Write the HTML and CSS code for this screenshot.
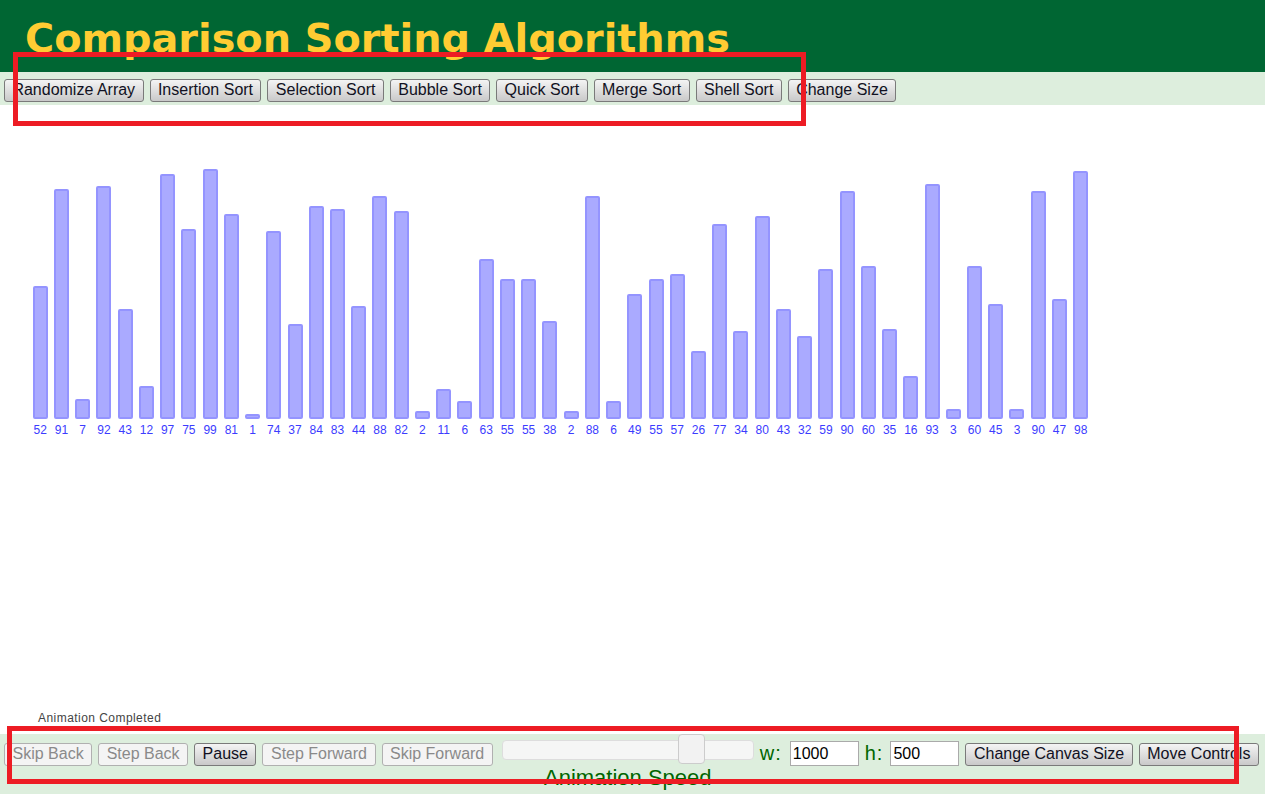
FILE: index.html
```html
<!DOCTYPE html>
<html lang="en">
<head>
    <meta charset="UTF-8">
    <meta name="viewport" content="width=device-width, initial-scale=1.0">
    <title>Comparison Sorting Algorithms</title>
    <link rel="stylesheet" href="styles.css">
</head>
<body>
    <header class="title-bar">
        <h1>Comparison Sorting Algorithms</h1>
    </header>

    <!-- Algorithm controls -->
    <div class="algo-bar">
        <button class="btn">Randomize Array</button>
        <button class="btn">Insertion Sort</button>
        <button class="btn">Selection Sort</button>
        <button class="btn">Bubble Sort</button>
        <button class="btn">Quick Sort</button>
        <button class="btn">Merge Sort</button>
        <button class="btn">Shell Sort</button>
        <button class="btn">Change Size</button>
    </div>

    <!-- Bars -->
    <main class="canvas-area">
        <div class="chart">
            <div class="col"><div class="bar" style="height:133px"></div><span class="num">52</span></div>
            <div class="col"><div class="bar" style="height:230.5px"></div><span class="num">91</span></div>
            <div class="col"><div class="bar" style="height:20.5px"></div><span class="num">7</span></div>
            <div class="col"><div class="bar" style="height:233px"></div><span class="num">92</span></div>
            <div class="col"><div class="bar" style="height:110.5px"></div><span class="num">43</span></div>
            <div class="col"><div class="bar" style="height:33px"></div><span class="num">12</span></div>
            <div class="col"><div class="bar" style="height:245.5px"></div><span class="num">97</span></div>
            <div class="col"><div class="bar" style="height:190.5px"></div><span class="num">75</span></div>
            <div class="col"><div class="bar" style="height:250.5px"></div><span class="num">99</span></div>
            <div class="col"><div class="bar" style="height:205.5px"></div><span class="num">81</span></div>
            <div class="col"><div class="bar" style="height:5.5px"></div><span class="num">1</span></div>
            <div class="col"><div class="bar" style="height:188px"></div><span class="num">74</span></div>
            <div class="col"><div class="bar" style="height:95.5px"></div><span class="num">37</span></div>
            <div class="col"><div class="bar" style="height:213px"></div><span class="num">84</span></div>
            <div class="col"><div class="bar" style="height:210.5px"></div><span class="num">83</span></div>
            <div class="col"><div class="bar" style="height:113px"></div><span class="num">44</span></div>
            <div class="col"><div class="bar" style="height:223px"></div><span class="num">88</span></div>
            <div class="col"><div class="bar" style="height:208px"></div><span class="num">82</span></div>
            <div class="col"><div class="bar" style="height:8px"></div><span class="num">2</span></div>
            <div class="col"><div class="bar" style="height:30.5px"></div><span class="num">11</span></div>
            <div class="col"><div class="bar" style="height:18px"></div><span class="num">6</span></div>
            <div class="col"><div class="bar" style="height:160.5px"></div><span class="num">63</span></div>
            <div class="col"><div class="bar" style="height:140.5px"></div><span class="num">55</span></div>
            <div class="col"><div class="bar" style="height:140.5px"></div><span class="num">55</span></div>
            <div class="col"><div class="bar" style="height:98px"></div><span class="num">38</span></div>
            <div class="col"><div class="bar" style="height:8px"></div><span class="num">2</span></div>
            <div class="col"><div class="bar" style="height:223px"></div><span class="num">88</span></div>
            <div class="col"><div class="bar" style="height:18px"></div><span class="num">6</span></div>
            <div class="col"><div class="bar" style="height:125.5px"></div><span class="num">49</span></div>
            <div class="col"><div class="bar" style="height:140.5px"></div><span class="num">55</span></div>
            <div class="col"><div class="bar" style="height:145.5px"></div><span class="num">57</span></div>
            <div class="col"><div class="bar" style="height:68px"></div><span class="num">26</span></div>
            <div class="col"><div class="bar" style="height:195.5px"></div><span class="num">77</span></div>
            <div class="col"><div class="bar" style="height:88px"></div><span class="num">34</span></div>
            <div class="col"><div class="bar" style="height:203px"></div><span class="num">80</span></div>
            <div class="col"><div class="bar" style="height:110.5px"></div><span class="num">43</span></div>
            <div class="col"><div class="bar" style="height:83px"></div><span class="num">32</span></div>
            <div class="col"><div class="bar" style="height:150.5px"></div><span class="num">59</span></div>
            <div class="col"><div class="bar" style="height:228px"></div><span class="num">90</span></div>
            <div class="col"><div class="bar" style="height:153px"></div><span class="num">60</span></div>
            <div class="col"><div class="bar" style="height:90.5px"></div><span class="num">35</span></div>
            <div class="col"><div class="bar" style="height:43px"></div><span class="num">16</span></div>
            <div class="col"><div class="bar" style="height:235.5px"></div><span class="num">93</span></div>
            <div class="col"><div class="bar" style="height:10.5px"></div><span class="num">3</span></div>
            <div class="col"><div class="bar" style="height:153px"></div><span class="num">60</span></div>
            <div class="col"><div class="bar" style="height:115.5px"></div><span class="num">45</span></div>
            <div class="col"><div class="bar" style="height:10.5px"></div><span class="num">3</span></div>
            <div class="col"><div class="bar" style="height:228px"></div><span class="num">90</span></div>
            <div class="col"><div class="bar" style="height:120.5px"></div><span class="num">47</span></div>
            <div class="col"><div class="bar" style="height:248px"></div><span class="num">98</span></div>
        </div>
        <p class="status">Animation Completed</p>
    </main>

    <!-- Animation controls -->
    <footer class="anim-bar">
        <button class="btn" disabled>Skip Back</button>
        <button class="btn" disabled>Step Back</button>
        <button class="btn">Pause</button>
        <button class="btn" disabled>Step Forward</button>
        <button class="btn" disabled>Skip Forward</button>
        <div class="speed">
            <div class="slider"><span class="thumb"></span></div>
            <div class="speed-label">Animation Speed</div>
        </div>
        <label class="size-label" for="w">w:</label>
        <input class="size-input" type="text" id="w" value="1000">
        <label class="size-label label-h" for="h">h:</label>
        <input class="size-input" type="text" id="h" value="500">
        <button class="btn">Change Canvas Size</button>
        <button class="btn">Move Controls</button>
    </footer>

    <!-- Red highlight boxes -->
    <div class="mark mark-top"></div>
    <div class="mark mark-bottom"></div>
</body>
</html>
```

FILE: styles.css
```css
* {
    box-sizing: border-box;
}

html, body {
    margin: 0;
    height: 100%;
    overflow: hidden;
}

body {
    position: relative;
    display: flex;
    flex-direction: column;
    background-color: white;
    font-family: "Liberation Sans", Arial, sans-serif;
}

.title-bar {
    height: 72px;
    flex: none;
    padding-left: 25px;
    background-color: #006633;
}

.title-bar h1 {
    margin: 0;
    padding-top: 14px;
    font-family: "DejaVu Sans", Verdana, sans-serif;
    font-size: 39.8px;
    font-weight: bold;
    line-height: 48px;
    color: #ffcc33;
    white-space: nowrap;
}

.algo-bar {
    height: 33px;
    flex: none;
    display: flex;
    gap: 6px;
    padding: 7px 0 0 4px;
    background-color: #ddeedd;
}

.btn {
    height: 23px;
    padding: 0 7.4px 2px;
    border: 1px solid #7a7a7a;
    border-radius: 3px;
    background: linear-gradient(#f4f4f4, #c9c9c9);
    font-family: "Liberation Sans", Arial, sans-serif;
    font-size: 16px;
    line-height: 20px;
    color: #111122;
    white-space: nowrap;
}

.btn:disabled {
    border-color: #b0b0b0;
    background: #f4f4f4;
    color: #8a8a8a;
}

.canvas-area {
    flex: 1;
    display: flex;
    flex-direction: column;
}

.chart {
    height: 335px;
    display: flex;
    align-items: flex-end;
    padding-left: 29.6px;
}

.col {
    width: 21.24px;
    display: flex;
    flex-direction: column;
    align-items: center;
}

.bar {
    width: 15px;
    border: 2px solid #9494ff;
    border-radius: 2px;
    background-color: #aaaaff;
}

.num {
    height: 21px;
    font-size: 12px;
    line-height: 23px;
    color: #3c3cff;
}

.status {
    margin: 272px 0 0 38px;
    font-size: 12px;
    line-height: 13px;
    letter-spacing: 0.45px;
    color: #444444;
}

.anim-bar {
    height: 60px;
    flex: none;
    display: flex;
    align-items: flex-start;
    padding: 9px 0 0 4px;
    overflow: hidden;
    background-color: #ddeedd;
}

.anim-bar .btn {
    margin-right: 6px;
    padding: 0 7.5px 2px;
}

.speed {
    width: 252px;
    margin: -3px 6px 0 3px;
    text-align: center;
}

.slider {
    position: relative;
    height: 20px;
    border: 1px solid #dddddd;
    border-radius: 4px;
    background-color: #f5f6f5;
}

.thumb {
    position: absolute;
    left: 175px;
    top: -7px;
    width: 27px;
    height: 30px;
    border: 1px solid #cccccc;
    border-radius: 4px;
    background-color: #f2f2f2;
}

.speed-label {
    margin-top: 6px;
    font-size: 22px;
    line-height: 24px;
    color: #006600;
}

.size-label {
    margin-right: 8px;
    font-family: "Liberation Sans", Arial, sans-serif;
    font-size: 20px;
    line-height: 20px;
    letter-spacing: 1px;
    color: #006600;
}

.label-h {
    margin-right: 7px;
}

.size-input {
    width: 69px;
    height: 25px;
    margin: -2px 6px 0 0;
    padding: 1px 2px;
    border: 1px solid #aaaaaa;
    background-color: white;
    font-family: "Liberation Sans", Arial, sans-serif;
    font-size: 16px;
    color: black;
}

.mark {
    position: absolute;
    border: 5px solid #ed1c24;
}

.mark-top {
    left: 13px;
    top: 52px;
    width: 793px;
    height: 74px;
}

.mark-bottom {
    left: 7px;
    top: 726px;
    width: 1232px;
    height: 58px;
}
```
